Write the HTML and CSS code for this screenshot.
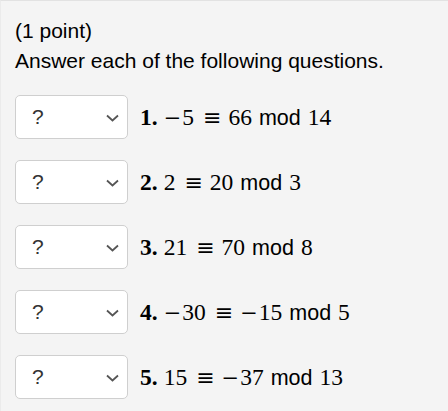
FILE: index.html
```html
<!DOCTYPE html>
<html>
<head>
<meta charset="utf-8">
<link rel="stylesheet" href="styles.css">
</head>
<body>
<div class="panel">
  <p class="points">(1 point)</p>
  <p class="intro">Answer each of the following questions.</p>
  <div class="rows">
    <div class="row">
      <div class="select"><span class="q">?</span><svg class="chev" width="13" height="8" viewBox="0 0 13 8"><path d="M1 1.5 L6.5 6.5 L12 1.5" fill="none" stroke="#555" stroke-width="1.8"/></svg></div>
      <div class="expr"><b class="num">1.</b><span class="neg">−</span><span class="m">5</span><span class="rel">≡</span><span class="m">66</span><span class="mod">mod</span><span class="m">14</span></div>
    </div>
    <div class="row">
      <div class="select"><span class="q">?</span><svg class="chev" width="13" height="8" viewBox="0 0 13 8"><path d="M1 1.5 L6.5 6.5 L12 1.5" fill="none" stroke="#555" stroke-width="1.8"/></svg></div>
      <div class="expr"><b class="num">2.</b><span class="m">2</span><span class="rel">≡</span><span class="m">20</span><span class="mod">mod</span><span class="m">3</span></div>
    </div>
    <div class="row">
      <div class="select"><span class="q">?</span><svg class="chev" width="13" height="8" viewBox="0 0 13 8"><path d="M1 1.5 L6.5 6.5 L12 1.5" fill="none" stroke="#555" stroke-width="1.8"/></svg></div>
      <div class="expr"><b class="num">3.</b><span class="m">21</span><span class="rel">≡</span><span class="m">70</span><span class="mod">mod</span><span class="m">8</span></div>
    </div>
    <div class="row">
      <div class="select"><span class="q">?</span><svg class="chev" width="13" height="8" viewBox="0 0 13 8"><path d="M1 1.5 L6.5 6.5 L12 1.5" fill="none" stroke="#555" stroke-width="1.8"/></svg></div>
      <div class="expr"><b class="num">4.</b><span class="neg">−</span><span class="m">30</span><span class="rel">≡</span><span class="neg">−</span><span class="m">15</span><span class="mod">mod</span><span class="m">5</span></div>
    </div>
    <div class="row">
      <div class="select"><span class="q">?</span><svg class="chev" width="13" height="8" viewBox="0 0 13 8"><path d="M1 1.5 L6.5 6.5 L12 1.5" fill="none" stroke="#555" stroke-width="1.8"/></svg></div>
      <div class="expr"><b class="num">5.</b><span class="m">15</span><span class="rel">≡</span><span class="neg">−</span><span class="m">37</span><span class="mod">mod</span><span class="m">13</span></div>
    </div>
  </div>
</div>
</body>
</html>
```
FILE: styles.css
```css
html, body {
  margin: 0;
  padding: 0;
  background: #f4f4f4;
}
.panel {
  box-sizing: border-box;
  width: 448px;
  height: 411px;
  background: #f4f4f4;
  border-top: 1px solid #e2e2e2;
  border-left: 1px solid #ebebeb;
  padding: 16px 14px 0 14px;
  font-family: "Liberation Sans", Arial, sans-serif;
  color: #000;
}
.points {
  margin: 0;
  font-size: 21px;
  line-height: 28px;
}
.intro {
  margin: 2px 0 0 0;
  font-size: 21px;
  line-height: 28px;
}
.rows {
  margin-top: 20px;
  display: flex;
  flex-direction: column;
  gap: 21px;
}
.row {
  display: flex;
  align-items: center;
  gap: 12px;
}
.select {
  box-sizing: border-box;
  width: 113px;
  height: 44px;
  background: #fff;
  border: 1px solid #cfcfcf;
  border-radius: 5px;
  display: flex;
  align-items: center;
  justify-content: space-between;
  padding: 0 8px 0 16px;
}
.q {
  font-size: 21px;
  color: #333;
}
.chev {
  display: block;
  margin-top: 1px;
}
.expr {
  display: flex;
  align-items: baseline;
  font-family: "Liberation Serif", "Times New Roman", serif;
  font-size: 23.5px;
  color: #000;
}
.num {
  font-weight: bold;
  font-size: 23.5px;
  margin-right: 6px;
}
.neg {
  font-family: "DejaVu Serif", serif;
  font-size: 21px;
  margin-right: 1px;
}
.rel {
  font-family: "DejaVu Serif", serif;
  font-size: 22px;
  margin: 0 7px 0 9px;
}
.mod {
  font-family: "Liberation Sans", Arial, sans-serif;
  font-size: 21.5px;
  margin: 0 7px 0 7px;
}
```
